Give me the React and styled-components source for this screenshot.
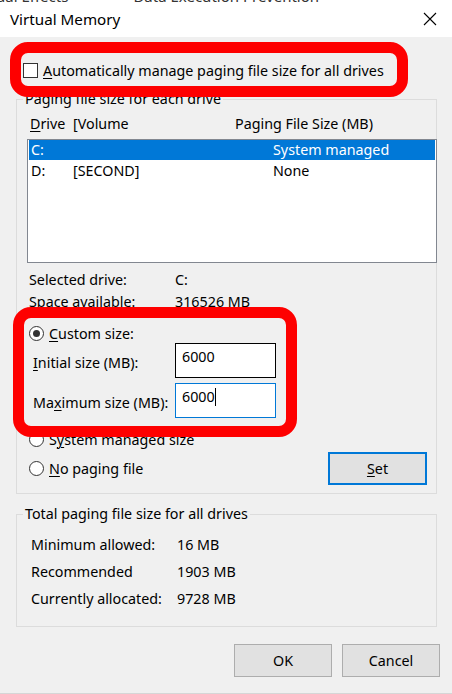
import styled, { createGlobalStyle } from "styled-components";

const GlobalStyle = createGlobalStyle`
  html, body {
    margin: 0;
    padding: 0;
    background: #f0f0f0;
  }
  body {
    font-family: "Noto Sans", "Liberation Sans", sans-serif;
    font-size: 14.3px;
    color: #000;
  }
`;

const Window = styled.div`
  position: relative;
  width: 452px;
  height: 694px;
  overflow: hidden;
  background: #f0f0f0;
  display: flex;
  flex-direction: column;
  border-bottom: 1px solid #d6d6d6;
  box-sizing: border-box;
`;

/* bits of the property sheet tabs peeking out above the dialog */
const BackTabs = styled.div`
  height: 4px;
  overflow: hidden;
  background: #fff;
  display: flex;
`;

const BackTab = styled.span`
  margin-left: ${(p) => p.$left}px;
  margin-top: -14px;
  line-height: 20px;
  font-size: 15px;
  white-space: nowrap;
  color: #333;
`;

const TitleBar = styled.div`
  height: 33px;
  background: #fff;
  display: flex;
  align-items: center;
  justify-content: space-between;
  padding: 0 15px 3px 10px;
  box-sizing: border-box;
`;

const Title = styled.span`
  font-size: 15.2px;
`;

const Body = styled.div`
  display: flex;
  flex-direction: column;
  padding-left: 16px;
`;

const AutoRow = styled.div`
  display: flex;
  align-items: center;
  gap: 5px;
  height: 20px;
  margin-top: 23px;
  padding-left: 7px;
  white-space: nowrap;
`;

const CheckBox = styled.span`
  width: 15px;
  height: 15px;
  box-sizing: border-box;
  border: 1px solid #333;
  background: #fff;
  flex: none;
`;

const Key = styled.span`
  text-decoration: underline;
  text-underline-offset: 2px;
  text-decoration-thickness: 1px;
`;

const GroupBox = styled.fieldset`
  margin: ${(p) => p.$top}px 0 0 0;
  padding: 0 0 ${(p) => p.$bottom}px 0;
  border: 1px solid #dcdcdc;
  width: 421px;
  min-width: 0;
  box-sizing: border-box;
`;

const Legend = styled.legend`
  margin-left: 6px;
  padding: 0 2px;
  line-height: 20px;
  white-space: nowrap;
`;

const HeaderRow = styled.div`
  display: grid;
  grid-template-columns: 43px 162px auto;
  margin-top: 5px;
  padding-left: 13px;
  line-height: 20px;
  white-space: nowrap;
`;

const ListBox = styled.div`
  margin: 5px 0 0 10px;
  width: 410px;
  height: 124px;
  box-sizing: border-box;
  border: 1px solid #828790;
  background: #fff;
`;

const ListRow = styled.div`
  display: grid;
  grid-template-columns: 42px 200px auto;
  height: 20px;
  line-height: 20px;
  margin: 0 1px 1px 1px;
  padding-left: 2px;
  white-space: nowrap;
  background: ${(p) => (p.$selected ? "#0078d7" : "transparent")};
  color: ${(p) => (p.$selected ? "#fff" : "#000")};
`;

const InfoGrid = styled.div`
  display: grid;
  grid-template-columns: ${(p) => p.$label}px auto;
  grid-auto-rows: ${(p) => p.$row}px;
  align-items: center;
  margin-top: ${(p) => p.$top}px;
  padding-left: ${(p) => p.$left}px;
  white-space: nowrap;
`;

const RadioRow = styled.label`
  display: flex;
  align-items: center;
  gap: 5px;
  height: 20px;
  margin-top: ${(p) => p.$top || 0}px;
  padding-left: 12px;
  white-space: nowrap;
`;

const Radio = styled.span`
  width: 15px;
  height: 15px;
  box-sizing: border-box;
  border: 1px solid #333;
  border-radius: 50%;
  background: #fff;
  flex: none;
  display: flex;
  align-items: center;
  justify-content: center;

  &::after {
    content: "";
    width: 7px;
    height: 7px;
    border-radius: 50%;
    background: #333;
    display: ${(p) => (p.$checked ? "block" : "none")};
  }
`;

const SizeRow = styled.div`
  display: flex;
  align-items: center;
  height: 35px;
  margin-top: ${(p) => p.$top || 0}px;
  padding-left: 16px;
  white-space: nowrap;
`;

const SizeLabel = styled.span`
  width: 142px;
  padding-top: 4px;
`;

const Field = styled.div`
  display: flex;
  align-items: flex-start;
  width: 101px;
  height: 35px;
  box-sizing: border-box;
  padding: 3px 0 0 6px;
  line-height: 20px;
  background: #fff;
  border: 1px solid ${(p) => (p.$focused ? "#0078d7" : "#000")};
`;

const Caret = styled.span`
  width: 1px;
  height: 18px;
  margin-top: 1px;
  background: #000;
`;

const BottomRow = styled.div`
  display: flex;
  align-items: center;
  justify-content: space-between;
  height: 33px;
  margin-top: 3px;
  padding-right: 9px;
`;

const Button = styled.button`
  width: ${(p) => p.$width || 98}px;
  height: 33px;
  box-sizing: border-box;
  padding: 0;
  font: inherit;
  color: #000;
  background: #e1e1e1;
  border: ${(p) => (p.$default ? "2px solid #0078d7" : "1px solid #adadad")};
`;

const ButtonRow = styled.div`
  display: flex;
  justify-content: flex-end;
  gap: 10px;
  margin-top: 17px;
  padding-right: 12px;
`;

/* red marker rectangles drawn on top of the screenshot */
const Highlight = styled.div`
  position: absolute;
  left: ${(p) => p.$x}px;
  top: ${(p) => p.$y}px;
  width: ${(p) => p.$w}px;
  height: ${(p) => p.$h}px;
  box-sizing: border-box;
  border: 11px solid #fe0000;
  border-radius: 18px;
  pointer-events: none;
`;

const CloseIcon = () => (
  <svg width="14" height="14" viewBox="0 0 14 14">
    <path d="M1 1 L13 13 M13 1 L1 13" stroke="#000" strokeWidth="1.1" />
  </svg>
);

const App = () => {
  return (
    <>
      <GlobalStyle />
      <Window>
        <BackTabs>
          <BackTab $left={-4}>ual Effects</BackTab>
          <BackTab $left={65}>Data Execution Prevention</BackTab>
        </BackTabs>
        <TitleBar>
          <Title>Virtual Memory</Title>
          <CloseIcon />
        </TitleBar>
        <Body>
          <AutoRow>
            <CheckBox />
            <span>
              <Key>A</Key>utomatically manage paging file size for all drives
            </span>
          </AutoRow>

          <GroupBox $top={9} $bottom={8}>
            <Legend>Paging file size for each drive</Legend>
            <HeaderRow>
              <span>
                <Key>D</Key>rive
              </span>
              <span>[Volume</span>
              <span>Paging File Size (MB)</span>
            </HeaderRow>
            <ListBox>
              <ListRow $selected>
                <span>C:</span>
                <span />
                <span>System managed</span>
              </ListRow>
              <ListRow>
                <span>D:</span>
                <span>[SECOND]</span>
                <span>None</span>
              </ListRow>
            </ListBox>
            <InfoGrid $label={146} $row={22} $top={5} $left={12}>
              <span>Selected drive:</span>
              <span>C:</span>
              <span>Space available:</span>
              <span>316526 MB</span>
            </InfoGrid>

            <RadioRow $top={11}>
              <Radio $checked />
              <span>
                <Key>C</Key>ustom size:
              </span>
            </RadioRow>
            <SizeRow>
              <SizeLabel>
                <Key>I</Key>nitial size (MB):
              </SizeLabel>
              <Field>6000</Field>
            </SizeRow>
            <SizeRow $top={5}>
              <SizeLabel>
                Ma<Key>x</Key>imum size (MB):
              </SizeLabel>
              <Field $focused>
                6000
                <Caret />
              </Field>
            </SizeRow>
            <RadioRow $top={11}>
              <Radio />
              <span>
                S<Key>y</Key>stem managed size
              </span>
            </RadioRow>
            <BottomRow>
              <RadioRow>
                <Radio />
                <span>
                  <Key>N</Key>o paging file
                </span>
              </RadioRow>
              <Button $default $width={99}>
                <Key>S</Key>et
              </Button>
            </BottomRow>
          </GroupBox>

          <GroupBox $top={10} $bottom={14}>
            <Legend>Total paging file size for all drives</Legend>
            <InfoGrid $label={146} $row={27} $top={7} $left={14}>
              <span>Minimum allowed:</span>
              <span>16 MB</span>
              <span>Recommended</span>
              <span>1903 MB</span>
              <span>Currently allocated:</span>
              <span>9728 MB</span>
            </InfoGrid>
          </GroupBox>

          <ButtonRow>
            <Button>OK</Button>
            <Button>Cancel</Button>
          </ButtonRow>
        </Body>

        <Highlight $x={10} $y={42} $w={398} $h={55} />
        <Highlight $x={13} $y={307} $w={284} $h={130} />
      </Window>
    </>
  );
};

export default App;
